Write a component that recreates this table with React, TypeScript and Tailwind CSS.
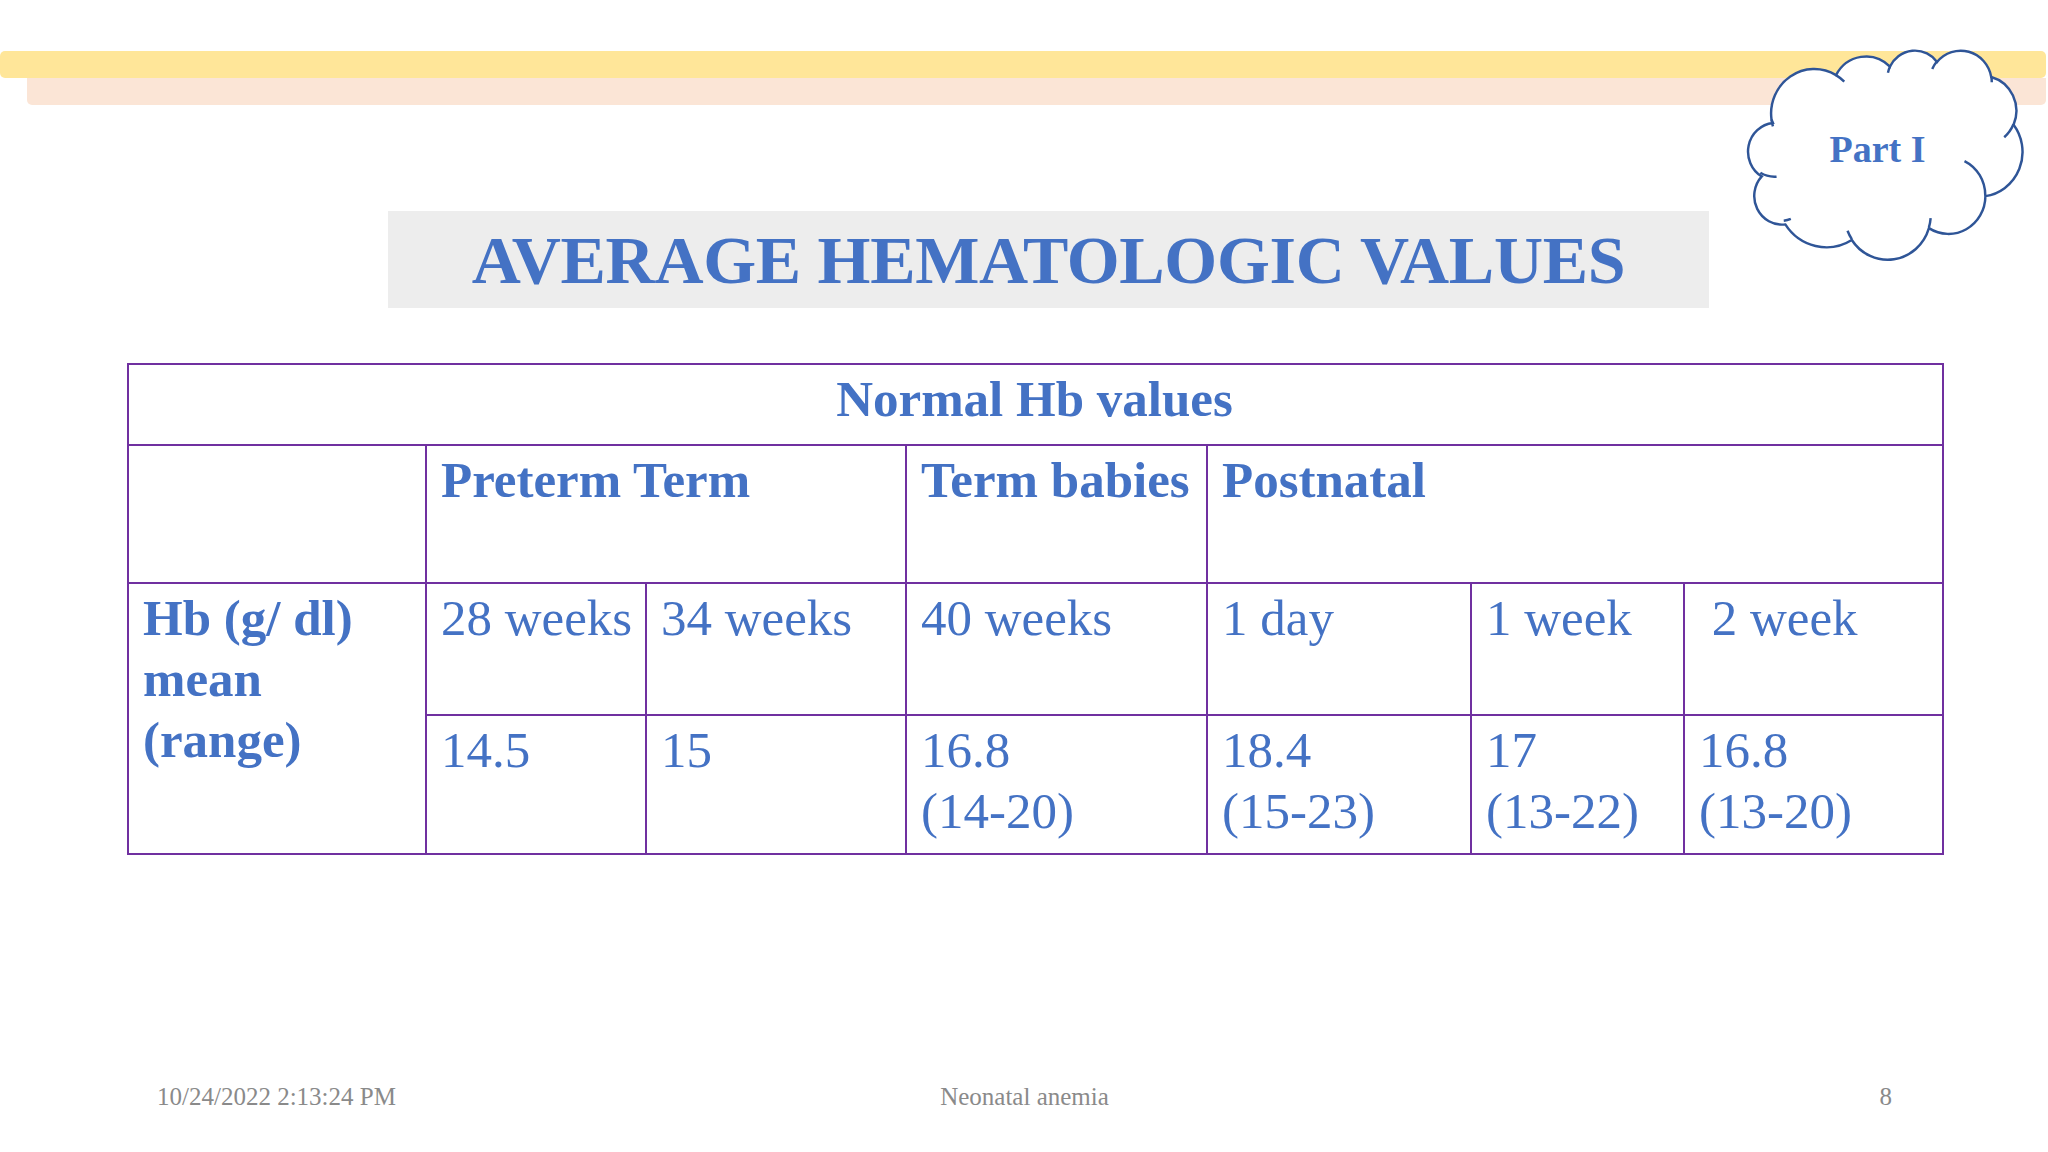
import React from "react";

type Pt = { x: number; y: number };

function buildCloud(w: number, h: number) {
  const sx = w / 43200;
  const sy = h / 43200;
  let cur: Pt = { x: 0, y: 0 };
  let d = "";
  const rad = (a: number) => ((a / 60000) * Math.PI) / 180;
  const moveTo = (x: number, y: number) => {
    cur = { x, y };
    d += `M ${(x * sx).toFixed(2)} ${(y * sy).toFixed(2)} `;
  };
  const arcTo = (wR: number, hR: number, stAng: number, swAng: number) => {
    const st = rad(stAng);
    const sw = rad(swAng);
    const t1 = Math.atan2(wR * Math.sin(st), hR * Math.cos(st));
    const cx = cur.x - wR * Math.cos(t1);
    const cy = cur.y - hR * Math.sin(t1);
    const en = st + sw;
    const t2 = Math.atan2(wR * Math.sin(en), hR * Math.cos(en));
    const ex = cx + wR * Math.cos(t2);
    const ey = cy + hR * Math.sin(t2);
    const large = Math.abs(sw) > Math.PI ? 1 : 0;
    const sweep = sw > 0 ? 1 : 0;
    d += `A ${(wR * sx).toFixed(2)} ${(hR * sy).toFixed(2)} 0 ${large} ${sweep} ${(ex * sx).toFixed(2)} ${(ey * sy).toFixed(2)} `;
    cur = { x: ex, y: ey };
  };

  moveTo(3900, 14370);
  arcTo(6753, 9190, -11429249, 7426832);
  arcTo(5333, 7267, -8646143, 5396714);
  arcTo(4365, 5945, -8748475, 5983381);
  arcTo(4857, 6595, -7859164, 7034504);
  arcTo(5333, 7273, -4722533, 6541615);
  arcTo(6775, 9220, -2776035, 7816140);
  arcTo(5785, 7867, 37501, 6842000);
  arcTo(6752, 9215, 1347096, 6910353);
  arcTo(7720, 10543, 3974558, 4297389);
  arcTo(4360, 5918, -16496525, 8804134);
  arcTo(4345, 5945, -14809710, 9151131);
  d += "Z";
  const outline = d;

  d = "";
  moveTo(4693, 26177);
  arcTo(4345, 5945, 5204520, 1585770);
  moveTo(6928, 34899);
  arcTo(4360, 5918, 4416628, 686848);
  moveTo(16478, 39090);
  arcTo(6752, 9215, 8257449, 844866);
  moveTo(28827, 34751);
  arcTo(6752, 9215, 387196, 959901);
  moveTo(34129, 22954);
  arcTo(5785, 7867, -4217541, 4255042);
  moveTo(41798, 15354);
  arcTo(5333, 7273, 1819082, 1665090);
  moveTo(38324, 5426);
  arcTo(4857, 6595, -824660, 891534);
  moveTo(29078, 3952);
  arcTo(4857, 6595, -8950887, 1091722);
  moveTo(22141, 4720);
  arcTo(4365, 5945, -9809656, 1061181);
  moveTo(14000, 5192);
  arcTo(6753, 9190, -4002417, 739161);
  moveTo(4127, 15789);
  arcTo(6753, 9190, 9459261, 711490);
  const inner = d;
  return { outline, inner };
}

function Cloud() {
  const w = 281;
  const h = 213;
  const { outline, inner } = buildCloud(w, h);
  return (
    <div className="absolute left-[1744px] top-[48px] w-[281px] h-[213px]">
      <svg width={w} height={h} viewBox={`-2 -2 ${w + 4} ${h + 4}`} className="absolute inset-0 overflow-visible">
        <path d={outline} fill="#ffffff" stroke="#2f5597" strokeWidth={2.5} />
        <path d={inner} fill="none" stroke="#2f5597" strokeWidth={2.5} />
      </svg>
      <div className="absolute inset-0 flex items-center justify-center">
        <span className="font-['Liberation_Serif','Times_New_Roman',serif] font-bold text-[38px] leading-none text-[#4472c4] mt-[-12px] ml-[-14px]">
          Part I
        </span>
      </div>
    </div>
  );
}

const td = "border-2 border-[#7030a0] align-top pl-[14px] pr-[2px] pt-[4px] leading-[61px]";

export default function App() {
  return (
    <div className="relative w-[2048px] h-[1152px] bg-white overflow-hidden font-['Liberation_Serif','Times_New_Roman',serif]">
      {/* decorative bars */}
      <div className="pt-[51px]">
        <div className="h-[27px] w-[2046px] bg-[#ffe699] rounded-[5px]" />
        <div className="h-[27px] ml-[27px] w-[2019px] bg-[#fbe5d6] rounded-b-[5px]" />
      </div>

      {/* title */}
      <div className="mt-[106px] ml-[388px] w-[1321px] h-[97px] bg-[#ededed] flex items-center justify-center">
        <h1 className="font-bold text-[68px] leading-none text-[#4472c4] tracking-[-0.3px]">
          AVERAGE HEMATOLOGIC VALUES
        </h1>
      </div>

      {/* table */}
      <div className="mt-[55px] ml-[127px]">
        <table className="table-fixed border-collapse w-[1815px] text-[51px] text-[#4472c4]">
          <colgroup>
            <col className="w-[298px]" />
            <col className="w-[220px]" />
            <col className="w-[260px]" />
            <col className="w-[301px]" />
            <col className="w-[264px]" />
            <col className="w-[213px]" />
            <col className="w-[259px]" />
          </colgroup>
          <tbody>
            <tr className="h-[81px]">
              <td colSpan={7} className={`${td} font-bold text-center !pl-0`}>
                Normal Hb values
              </td>
            </tr>
            <tr className="h-[138px]">
              <td className={td}></td>
              <td colSpan={2} className={`${td} font-bold whitespace-nowrap`}>
                Preterm Term
              </td>
              <td className={`${td} font-bold whitespace-nowrap`}>Term babies</td>
              <td colSpan={3} className={`${td} font-bold whitespace-nowrap`}>
                Postnatal
              </td>
            </tr>
            <tr className="h-[132px]">
              <td rowSpan={2} className={`${td} font-bold`}>
                Hb (g/ dl)
                <br />
                mean
                <br />
                (range)
              </td>
              <td className={`${td} whitespace-nowrap`}>28 weeks</td>
              <td className={`${td} whitespace-nowrap`}>34 weeks</td>
              <td className={`${td} whitespace-nowrap`}>40 weeks</td>
              <td className={`${td} whitespace-nowrap`}>1 day</td>
              <td className={`${td} whitespace-nowrap`}>1 week</td>
              <td className={`${td} whitespace-nowrap`}>{"\u00a02 week"}</td>
            </tr>
            <tr className="h-[139px]">
              <td className={td}>14.5</td>
              <td className={td}>15</td>
              <td className={td}>
                16.8
                <br />
                (14-20)
              </td>
              <td className={td}>
                18.4
                <br />
                (15-23)
              </td>
              <td className={td}>
                17
                <br />
                (13-22)
              </td>
              <td className={td}>
                16.8
                <br />
                (13-20)
              </td>
            </tr>
          </tbody>
        </table>
      </div>

      {/* footer */}
      <div className="absolute left-0 right-0 top-[1082px] grid grid-cols-[1fr_auto_1fr] pl-[157px] pr-[156px] text-[25px] leading-[30px] text-[#8a8a8a]">
        <div>10/24/2022 2:13:24 PM</div>
        <div className="text-center">Neonatal anemia</div>
        <div className="text-right">8</div>
      </div>

      <Cloud />
    </div>
  );
}
